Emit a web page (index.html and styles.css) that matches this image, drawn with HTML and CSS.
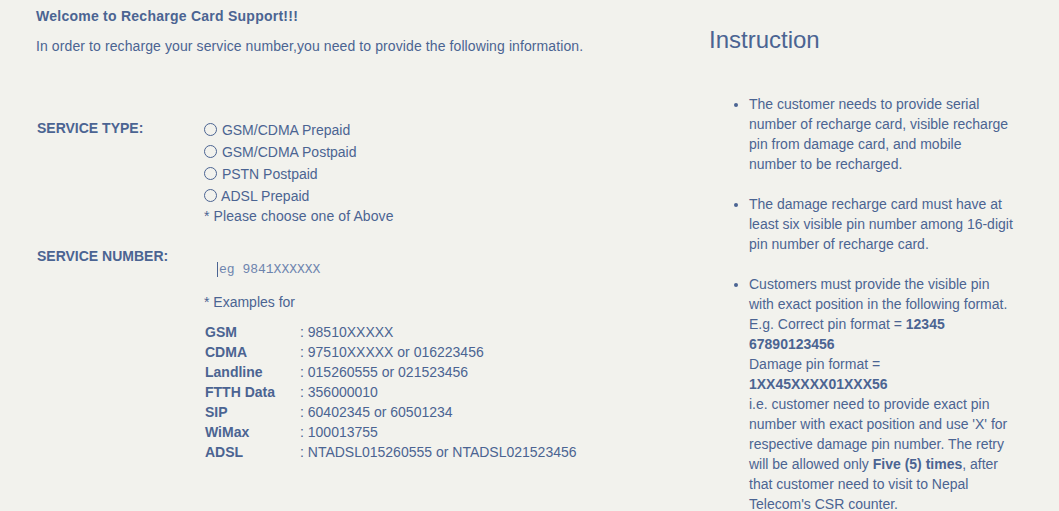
FILE: index.html
```html
<!DOCTYPE html>
<html lang="en">
	<head>
		<meta http-equiv="Content-Type" content="text/html; charset=utf-8" />
		<title>Recharge Card Support</title>
		<link rel="stylesheet" href="styles.css">
	</head>

	<body>
		<div class="wrap">
			<div class="main">
				<h4 class="welcome">Welcome to Recharge Card Support!!!</h4>
				<p class="intro">In order to recharge your service number,you need to provide the following information.</p>

				<div class="field type-field">
					<div class="label">SERVICE TYPE:</div>
					<div class="value opts">
						<label class="opt"><input type="radio" name="stype"> GSM/CDMA Prepaid</label>
						<label class="opt"><input type="radio" name="stype"> GSM/CDMA Postpaid</label>
						<label class="opt"><input type="radio" name="stype"> PSTN Postpaid</label>
						<label class="opt"><input type="radio" name="stype"> ADSL Prepaid</label>
						<div class="note choose">* Please choose one of Above</div>
					</div>
				</div>

				<div class="field number-field">
					<div class="label">SERVICE NUMBER:</div>
					<div class="value">
						<div class="num-box">
							<input class="num" type="text" placeholder="eg 9841XXXXXX" autofocus>
						</div>
						<div class="note examples-for">* Examples for</div>
						<div class="examples">
							<b>GSM</b><span>: 98510XXXXX</span>
							<b>CDMA</b><span>: 97510XXXXX or 016223456</span>
							<b>Landline</b><span>: 015260555 or 021523456</span>
							<b>FTTH Data</b><span>: 356000010</span>
							<b>SIP</b><span>: 60402345 or 60501234</span>
							<b>WiMax</b><span>: 100013755</span>
							<b>ADSL</b><span>: NTADSL015260555 or NTADSL021523456</span>
						</div>
					</div>
				</div>
			</div>

			<div class="side">
				<h2 class="side-title">Instruction</h2>
				<ul class="steps">
					<li>The customer needs to provide serial number of recharge card, visible recharge pin from damage card, and mobile<br>number to be recharged.</li>
					<li>The damage recharge card must have at least six visible pin number among 16-digit pin number of recharge card.</li>
					<li>Customers must provide the visible pin with exact position in the following format.<br>
						E.g. Correct pin format = <b>12345 67890123456</b><br>
						Damage pin format = <b>1XX45XXXX01XXX56</b><br>
						i.e. customer need to provide exact pin number with exact position and use 'X' for respective damage pin number. The retry will be allowed only <b>Five (5) times</b>, after that customer need to visit to Nepal Telecom's CSR counter.</li>
				</ul>
			</div>
		</div>
	</body>
</html>
```

FILE: styles.css
```css
body,h2,h4,p,ul,li{
	padding:0;
	margin:0;
}
body{
	background: #f2f2ed;
	color: #4b6492;
	font: 14px/20px "Liberation Sans", Arial, sans-serif;
}
.wrap {
	display: flex;
}
.main {
	width: 673px;
	padding: 6px 0 0 36px;
}
.welcome {
	font-size: 14px;
	font-weight: bold;
	line-height: 20px;
	letter-spacing: 0.25px;
}
.intro {
	margin-top: 10px;
	letter-spacing: 0.1px;
}
.field {
	display: flex;
}
.label {
	width: 168px;
	padding-left: 1px;
	box-sizing: border-box;
	font-weight: bold;
}
.type-field {
	margin-top: 62px;
}
.opts {
	padding-top: 1px;
}
.opt {
	display: block;
	line-height: 22px;
}
.opt input {
	-webkit-appearance: none;
	appearance: none;
	box-sizing: border-box;
	width: 13px;
	height: 13px;
	margin: 4px 1px 0 0;
	border: 1px solid #4b6492;
	border-radius: 50%;
	background: transparent;
	vertical-align: top;
}
.choose {
	margin-top: -1px;
	letter-spacing: 0.1px;
}
.number-field {
	margin-top: 20px;
}
.num-box {
	position: relative;
	margin: 15px 0 0 12px;
}
/* caret of the focused field */
.num-box:before {
	content: '';
	position: absolute;
	left: 1px;
	top: 1px;
	width: 1px;
	height: 15px;
	background: #4b6492;
}
.num {
	display: block;
	box-sizing: border-box;
	width: 220px;
	height: 18px;
	padding: 0 0 0 3px;
	border: none;
	outline: none;
	background: transparent;
	color: #4b6492;
	caret-color: transparent;
	font: 13px/18px "Liberation Mono", "Courier New", monospace;
}
.num::placeholder {
	color: #6d84ad;
	opacity: 1;
}
.examples-for {
	margin-top: 13px;
}
.examples {
	display: grid;
	grid-template-columns: 96px auto;
	margin-top: 10px;
}
.examples b {
	padding-left: 1px;
}
.side {
	padding-top: 26px;
}
.side-title {
	font-size: 24px;
	font-weight: normal;
	line-height: 28px;
}
.steps {
	width: 268px;
	margin-top: 40px;
	padding-left: 40px;
}
.steps li {
	margin-bottom: 20px;
}
```
